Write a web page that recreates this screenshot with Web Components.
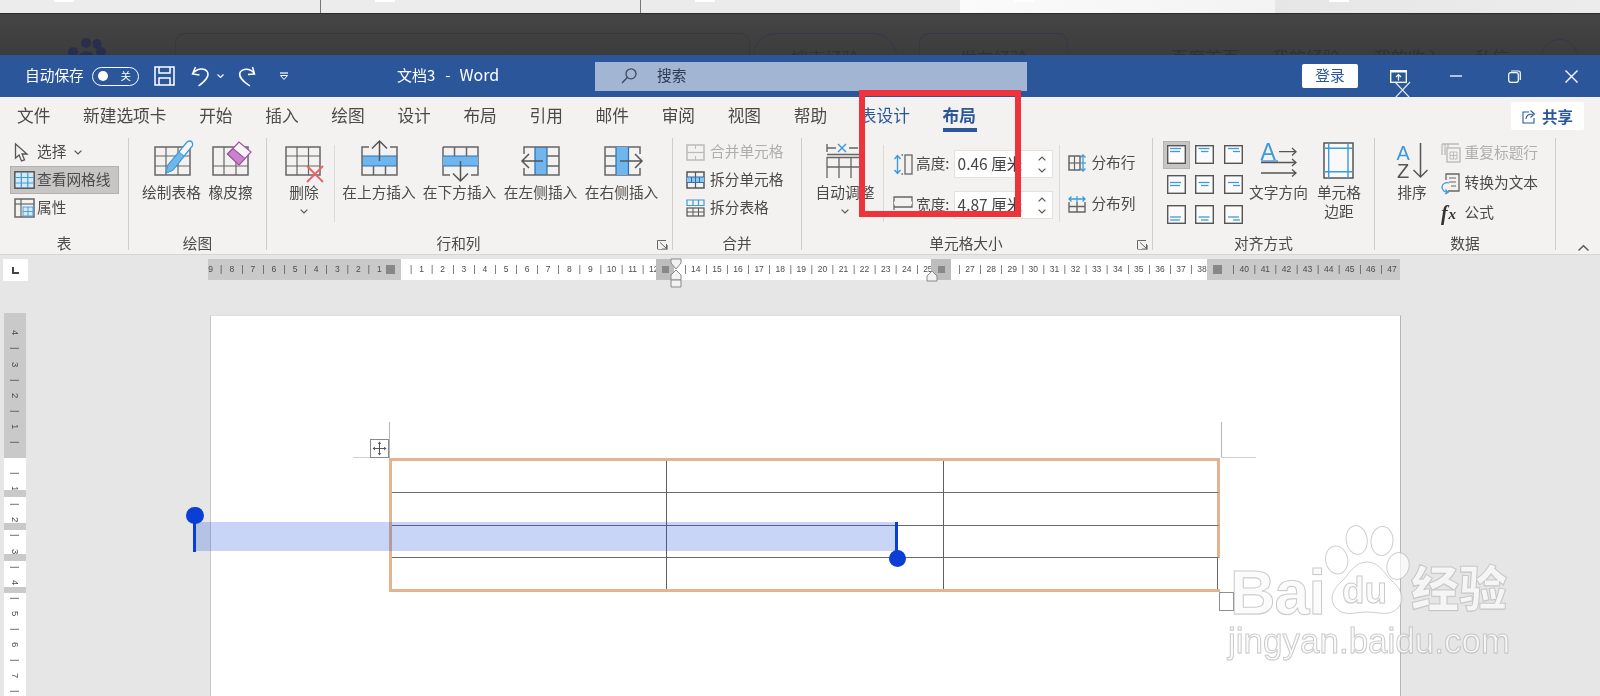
<!DOCTYPE html>
<html lang="zh"><head><meta charset="utf-8"><title>文档3 - Word</title>
<style>
html,body{margin:0;padding:0;width:1600px;height:696px;overflow:hidden;background:#e6e6e6}
body{position:relative;font-family:"Noto Sans CJK SC","Liberation Sans",sans-serif;color:#4a4a4a;filter:blur(.4px)}
</style></head><body>
<wd-webstrip></wd-webstrip>
<wd-webbar></wd-webbar>
<wd-titlebar></wd-titlebar>
<wd-tabs></wd-tabs>
<wd-ribbon>
  <rb-group w="129" pl="10" label="表">
    <div style="display:flex;flex-direction:column;width:109px">
      <rb-small icon="pointer" chev style="--ico:20.5px;--gap:3px;--pad:3.5px">选择</rb-small>
      <rb-small icon="gridview" on style="--ico:20.5px;--gap:3px;--pad:3.5px">查看网格线</rb-small>
      <rb-small icon="props" style="--ico:20.5px;--gap:3px;--pad:3.5px">属性</rb-small>
    </div>
  </rb-group>
  <rb-group w="138" pl="13" label="绘图">
    <rb-big w="59" icon="draw">绘制表格</rb-big>
    <rb-big w="44" icon="eraser" style="margin-left:7.6px">橡皮擦</rb-big>
  </rb-group>
  <rb-group w="406" pl="18" label="行和列" shift="11" launcher>
    <rb-big w="38" icon="del" chev>删除</rb-big>
    <rb-sep style="margin-left:11px"></rb-sep>
    <rb-big w="74" icon="above" style="margin-left:7px">在上方插入</rb-big>
    <rb-big w="74" icon="below" style="margin-left:6.6px">在下方插入</rb-big>
    <rb-big w="74" icon="left" style="margin-left:7px">在左侧插入</rb-big>
    <rb-big w="74" icon="right" style="margin-left:7px">在右侧插入</rb-big>
  </rb-group>
  <rb-group w="129" pl="13" label="合并">
    <div style="display:flex;flex-direction:column;width:110px">
      <rb-small icon="merge" disabled style="--ico:19px;--gap:5px">合并单元格</rb-small>
      <rb-small icon="splitcell" style="--ico:19px;--gap:5px">拆分单元格</rb-small>
      <rb-small icon="splittable" style="--ico:19px;--gap:5px">拆分表格</rb-small>
    </div>
  </rb-group>
  <rb-group w="351" pl="13" label="单元格大小" shift="11" launcher>
    <rb-big w="60" icon="autofit" chev>自动调整</rb-big>
    <rb-sep style="margin-left:7.6px"></rb-sep>
    <div style="display:flex;flex-direction:column;gap:13px;padding-top:12px;margin-left:9px">
      <rb-field icon="height" label="高度:" value="0.46 厘米"></rb-field>
      <rb-field icon="width" label="宽度:" value="4.87 厘米"></rb-field>
    </div>
    <rb-sep style="margin-left:6px"></rb-sep>
    <div style="display:flex;flex-direction:column;gap:13px;padding-top:11px;margin-left:8.4px;width:70px">
      <rb-small icon="distrow" style="--ico:18px;--gap:5.4px">分布行</rb-small>
      <rb-small icon="distcol" style="--ico:18px;--gap:5.4px">分布列</rb-small>
    </div>
  </rb-group>
  <rb-group w="222" pl="10" label="对齐方式">
    <rb-tilegrid></rb-tilegrid>
    <rb-big w="59" icon="textdir" style="margin-left:1.4px">文字方向</rb-big>
    <rb-big w="44" icon="margins" style="margin-left:9px">单元格<br>边距</rb-big>
  </rb-group>
  <rb-group w="181" pl="22" label="数据">
    <rb-big w="30" icon="sort">排序</rb-big>
    <div style="display:flex;flex-direction:column;margin-left:13.5px;width:100px">
      <rb-small icon="repeat" disabled style="--ico:20px;--gap:4.1px;--h:30px">重复标题行</rb-small>
      <rb-small icon="convert" style="--ico:20px;--gap:4.1px;--h:30px">转换为文本</rb-small>
      <rb-small icon="fx" style="--ico:20px;--gap:4.1px;--h:31px">公式</rb-small>
    </div>
  </rb-group>
  <wd-icon name="collapse" style="margin:107px 0 0 22px"></wd-icon>
</wd-ribbon>
<wd-hruler></wd-hruler>
<wd-docarea></wd-docarea>
<wd-overlay></wd-overlay>

<script>
const S='#666',B='#3f9bd8',F='#6fb6ee';
const svg=(w,h,inner)=>`<svg xmlns="http://www.w3.org/2000/svg" width="${w}" height="${h}" viewBox="0 0 ${w} ${h}" fill="none" stroke-linecap="butt" style="overflow:visible;display:block">${inner}</svg>`;
const tbl=(x,y,w,h,cols,rows,c=S,sw=1.5)=>{
  let s=`<rect x="${x}" y="${y}" width="${w}" height="${h}" stroke="${c}" stroke-width="${sw}"/>`;
  cols.forEach(a=>s+=`<path d="M${a} ${y}V${y+h}" stroke="${c}" stroke-width="${sw*.8}"/>`);
  rows.forEach(a=>s+=`<path d="M${x} ${a}H${x+w}" stroke="${c}" stroke-width="${sw*.8}"/>`);
  return s;};
const W='#fff';
const ICONS={
 save:svg(21,20,`<path d="M1 1H20V19H1Z" stroke="${W}" stroke-width="1.5"/><path d="M5 1V7H16V1M5 19V12H16V19" stroke="${W}" stroke-width="1.5"/>`),
 undo:svg(19,20,`<path d="M4.5 1L1.5 8L8.5 9M1.5 8C6 2 14 1.5 16.5 6C19 11 13 16 7.5 20" stroke="${W}" stroke-width="1.5"/>`),
 redo:svg(19,20,`<path d="M14.5 1L16.5 8L10 8.5M16.5 8C13 2 5 2 2 6.5C0 11.5 6 16 12 20" stroke="${W}" stroke-width="1.5"/>`),
 chevw:svg(7,5,`<path d="M.5 .5L3.5 3.5L6.5 .5" stroke="${W}" stroke-width="1.2"/>`),
 qat:svg(8,8,`<path d="M0 1H8" stroke="${W}" stroke-width="1.2"/><path d="M.5 3.5H7.5L4 7.5Z" stroke="${W}" stroke-width="1"/>`),
 search:svg(16,16,`<circle cx="10" cy="5.8" r="5" stroke="#3c4a60" stroke-width="1.3"/><path d="M6.3 9.5L1 15" stroke="#3c4a60" stroke-width="1.4"/>`),
 display:svg(17,13,`<rect x=".7" y=".7" width="15.6" height="11.6" stroke="${W}" stroke-width="1.3"/><path d="M.7 1.5H16.3" stroke="${W}" stroke-width="2"/><path d="M8.5 10.5V4.5M6 7L8.5 4.5L11 7" stroke="${W}" stroke-width="1.2"/><path d="M5 12L20 28M20 12L5 28" stroke="#dfe6f2" stroke-width="1.2"/>`),
 min:svg(12,2,`<path d="M0 1H12" stroke="${W}" stroke-width="1.3"/>`),
 restore:svg(13,13,`<rect x=".7" y="2.7" width="9.6" height="9.6" rx="2" stroke="${W}" stroke-width="1.2"/><path d="M3 1H10.5Q12.3 1 12.3 3V10" stroke="${W}" stroke-width="1.2"/>`),
 close:svg(13,13,`<path d="M.5 .5L12.5 12.5M12.5 .5L.5 12.5" stroke="${W}" stroke-width="1.4"/>`),
 share:svg(14,15,`<path d="M7 3H1V14H12V9" stroke="#2b579a" stroke-width="1.1"/><path d="M4 10C4 6 7 5 11 5M8.5 1.5L12.5 5L8.5 8.5" stroke="#2b579a" stroke-width="1.1"/>`),
 pointer:svg(15,19,`<path d="M2 1V15L5.6 12L8 18L11 16.8L8.6 11H13.5Z" stroke="#555" stroke-width="1.3" transform="translate(-.5 0)"/>`),
 gridview:svg(21,18,`<rect x=".8" y=".8" width="19.4" height="16.4" fill="#d3eafa" stroke="#555" stroke-width="1.5"/><path d="M7.3 1V17M13.8 1V17M1 6.5H20M1 12H20" stroke="${B}" stroke-width="1.2"/>`),
 props:svg(21,20,tbl(1,1,19,18,[7],[6]) +`<rect x="9" y="9" width="10" height="9" fill="#d3eafa" stroke="${B}" stroke-width=".9"/><path d="M14 9V18M9 13.5H19" stroke="${B}" stroke-width=".9"/>`),
 draw:svg(40,42,tbl(3,5,35,28,[14,26],[14,24])+`<path d="M14 31L16 23L35 0Q38 -2 40 0Q41.5 3 39.5 5L21 28Z" fill="#f7f7f7" stroke="${B}" stroke-width="1.3"/><path d="M14 31L16 23L27 10L32 14L21 28Z" fill="${F}" stroke="${B}" stroke-width="1"/>`),
 eraser:svg(40,42,tbl(2,5,35,28,[13,25],[24])+`<path d="M16.5 12L28 0L40 10L28 23Z" fill="#f7f7f7" stroke="#a24fa8" stroke-width="1.2"/><path d="M16.5 12L22 6.5L34 16.5L28 23Z" fill="#c983cb" stroke="#a24fa8" stroke-width="1.1"/>`),
 del:svg(38,42,tbl(1,5,34,28,[12,23.5],[14,24])+`<path d="M22 24L38 40M38 24L22 40" stroke="#e8636a" stroke-width="1.8"/>`),
 above:svg(40,42,`<path d="M3 12V5H10M31 5H38V12" stroke="${S}" stroke-width="1.5"/><rect x="3" y="14" width="35" height="10" fill="${F}"/><path d="M3 14H38M3 24H38" stroke="#2e6fb0" stroke-width="1.2"/><path d="M3 12V33H38V12M14.5 24V33M26.5 24V33" stroke="${S}" stroke-width="1.5"/><path d="M20.5 -1V19M13 6.5L20.5 -1L28 6.5" stroke="#555" stroke-width="1.5"/>`),
 below:svg(40,42,`<path d="M3 5H38V26M3 5V26M14.5 5V14M26.5 5V14" stroke="${S}" stroke-width="1.5"/><rect x="3" y="14" width="35" height="10" fill="${F}"/><path d="M3 14H38M3 24H38" stroke="#2e6fb0" stroke-width="1.2"/><path d="M3 26V33H10M31 33H38V26" stroke="${S}" stroke-width="1.5"/><path d="M20.5 19V39M13 31.5L20.5 39L28 31.5" stroke="#555" stroke-width="1.5"/>`),
 left:svg(40,42,`<path d="M9 5H3V12M3 26V33H9" stroke="${S}" stroke-width="1.5"/><rect x="14" y="5" width="12" height="28" fill="${F}"/><path d="M14 5V33M26 5V33" stroke="#2e6fb0" stroke-width="1.2"/><path d="M9 5H38V33H9M26 14H38M26 24H38" stroke="${S}" stroke-width="1.5"/><path d="M22 19H1M8 12L1 19L8 26" stroke="#555" stroke-width="1.5"/>`),
 right:svg(40,42,`<path d="M32 5H3V33H32M3 14H14M3 24H14" stroke="${S}" stroke-width="1.5"/><path d="M32 5H38V12M38 26V33H32" stroke="${S}" stroke-width="1.5"/><rect x="14" y="5" width="12.5" height="28" fill="${F}"/><path d="M14 5V33M26.5 5V33" stroke="#2e6fb0" stroke-width="1.2"/><path d="M18 19H40M33 12L40 19L33 26" stroke="#555" stroke-width="1.5"/>`),
 merge:svg(19,17,tbl(1,1,17,15,[],[8.5],'#bbb')+`<path d="M9.5 1V5M9.5 12V16" stroke="#bbb"/>`),
 splitcell:svg(19,18,tbl(1,1,17,16,[9.5],[],'#555')+`<rect x="1" y="6" width="17" height="5.5" fill="#8cc5ef"/><path d="M1 6H18M1 11.5H18M5.5 6V11.5M9.5 6V11.5M13.5 6V11.5" stroke="#2e6fb0"/>`),
 splittable:svg(19,18,`<path d="M1 1H18V6.5H1ZM7 1V6.5M12.5 1V6.5" stroke="${B}" stroke-width="1.2"/>`+tbl(1,9,17,8,[7,12.5],[13],'#555',1.2)),
 autofit:svg(40,42,`<path d="M2 2V10M2 6H11M24 6H33M38 2V10" stroke="${S}" stroke-width="1.4"/><path d="M13 2L21 10M21 2L13 10" stroke="${B}" stroke-width="1.5"/><path d="M2 12.5H38M2 15.5H38" stroke="${S}" stroke-width="1.3"/><path d="M2 15V36M14 15V36M26 15V36M38 15V36M2 25H38" stroke="${S}" stroke-width="1.3"/>`),
 height:svg(20,21,`<path d="M4.5 2V19M1.5 5L4.5 1.5L7.5 5M1.5 16L4.5 19.5L7.5 16" stroke="${B}" stroke-width="1.4"/><path d="M8.5 1H10M8.5 20H10" stroke="${S}" stroke-width="1.3"/><rect x="12" y="1" width="7" height="19" stroke="${S}" stroke-width="1.3"/>`),
 width:svg(20,21,`<path d="M1 2H19V12H1ZM1 15V7" stroke="${S}" stroke-width="1.3"/><path d="M1 8H19" stroke="#f3f2f1" stroke-width="3"/><path d="M1 19H19M4 16.5L1 19L4 21.5M16 16.5L19 19L16 21.5" stroke="${B}" stroke-width="1.3"/>`),
 distrow:svg(18,18,tbl(1,2,11,14,[6.5],[9])+`<path d="M15 1V17M12.5 3.5L15 1L17.5 3.5M12.5 14.5L15 17L17.5 14.5" stroke="${B}" stroke-width="1.3"/><path d="M12 9H18" stroke="${B}" stroke-width="1.2"/>`),
 distcol:svg(18,18,`<path d="M1 4H17M3.5 1.5L1 4L3.5 6.5M14.5 1.5L17 4L14.5 6.5" stroke="${B}" stroke-width="1.3" /><path d="M9 1V7" stroke="${B}" stroke-width="1.2"/><path d="M1 7V17H17V7M9 7V17M1 11.5H17" stroke="${S}" stroke-width="1.4"/>`),
 textdir:svg(40,42,`<text x="2.5" y="17.5" font-family="Liberation Sans,sans-serif" font-size="23" fill="${B}" stroke="none">A</text><path d="M3 19H20" stroke="${B}" stroke-width="1.4"/><path d="M21 9.7H38M34 6L38 9.7L34 13.5M3 20.5H38M34 17L38 20.5L34 24M3 31H38M34 27.5L38 31L34 34.5" stroke="#555" stroke-width="1.3"/>`),
 margins:svg(40,42,`<rect x="5" y="1" width="29" height="35" fill="#f9f9f9" stroke="#555" stroke-width="1.5"/><path d="M9.7 1V36M29 1V36M5 6.3H34M5 29.7H34" stroke="${B}" stroke-width="1.4"/>`),
 sort:svg(40,42,`<text x="4.5" y="18" font-family="Liberation Sans,sans-serif" font-size="20" fill="${B}" stroke="none">A</text><text x="5" y="36" font-family="Liberation Sans,sans-serif" font-size="20" fill="#555" stroke="none">Z</text><path d="M28.5 1V35M21.5 28L28.5 35L35.5 28" stroke="#555" stroke-width="1.5"/>`),
 repeat:svg(20,20,`<path d="M1 1H18M1 1V12M4 1V12M7 1V5" stroke="#bbb" stroke-width="1.3"/><rect x="6" y="5" width="13" height="14" stroke="#bbb" stroke-width="1.4"/><path d="M9 9H16V16H9ZM12.5 9V16M9 12.5H16" stroke="#bbb"/>`),
 convert:svg(20,21,`<path d="M5 7V1H18V18H7" stroke="${S}" stroke-width="1.3"/><path d="M8 5H15M8 9H15M10 13H15" stroke="${S}"/><path d="M8 10A5 5 0 0 0 1 14A5 5 0 0 0 7 19M4.5 16.5L7 19.5L4 21" stroke="${B}" stroke-width="1.3"/>`),
 fx:svg(20,20,`<text x="0" y="16" font-family="Liberation Serif,serif" font-style="italic" font-weight="700" font-size="20" fill="#333" stroke="none">f</text><text x="7.5" y="15" font-family="Liberation Serif,serif" font-style="italic" font-weight="700" font-size="15" fill="#333" stroke="none">x</text>`),
 launcher:svg(11,10,`<path d="M.5 9V.5H9" stroke="#666"/><path d="M3 2.5L9.5 8.5M9.5 4V9H5" stroke="#666"/><path d="M.5 9.5H10.5V5" stroke="#999"/>`),
 chev:svg(8,5,`<path d="M.6 .6L4 4L7.4 .6" stroke="#555" stroke-width="1.2"/>`),
 up:svg(8,5,`<path d="M.6 4.4L4 1L7.4 4.4" stroke="#555" stroke-width="1.2"/>`),
 collapse:svg(11,6,`<path d="M.5 5.5L5.5 .7L10.5 5.5" stroke="#555" stroke-width="1.4"/>`),
 paw:svg(39,18,`<ellipse cx="19" cy="5" rx="5" ry="5" fill="#2b2e4a"/><ellipse cx="30" cy="6" rx="4.5" ry="5" fill="#2b2e4a"/><ellipse cx="6" cy="14" rx="5" ry="5" fill="#2b2e4a"/><ellipse cx="34" cy="14" rx="5" ry="5" fill="#2b2e4a"/><path d="M12 18C14 12 25 12 27 18Z" fill="#2b2e4a"/>`)
};
const def=(n,c)=>customElements.define(n,c);
const sh=(el,html)=>{el.attachShadow({mode:'open'}).innerHTML=html;return el.shadowRoot;};

def('wd-icon',class extends HTMLElement{connectedCallback(){if(this.shadowRoot)return;
 sh(this,`<style>:host{display:block;flex:none;line-height:0}</style>${ICONS[this.getAttribute('name')]||''}`);}});

def('wd-webstrip',class extends HTMLElement{connectedCallback(){
 const cell=(w,bg,bord)=>`<div style="width:${w}px;background:${bg};${bord?'border-right:1px solid #777;':''}"><i></i></div>`;
 sh(this,`<style>:host{display:flex;height:13px;border-bottom:1px solid #2c2c2c;overflow:hidden}
 div{flex:none;height:13px;box-sizing:border-box}i{display:block;margin-left:54px;width:20px;height:1.5px;background:#fff}</style>
 ${cell(320.5,'#ececec',1)}${cell(320,'#ececec',1)}${cell(319.5,'#ebebeb',0)}${cell(315,'linear-gradient(90deg,#fbfbfb,#f3f3f3)',0)}${cell(325,'linear-gradient(90deg,#e6e6e6,#ececec)',0)}`);}});

def('wd-webbar',class extends HTMLElement{connectedCallback(){
 sh(this,`<style>:host{display:flex;height:41px;background:linear-gradient(#454545,#3c3c3c);overflow:hidden;align-items:flex-start;color:#2f3136;font-size:17px;line-height:20px}
 .paw{margin:24px 0 0 67px}.sb{flex:none;width:575px;height:60px;margin:19px 0 0 69px;border:1px solid #363840;border-radius:10px;box-sizing:border-box}
 .b{flex:none;height:60px;box-sizing:border-box;border:1.5px solid #33384a;margin-top:19px;text-align:center;padding-top:14px}
 .n{flex:none;margin-top:33px;white-space:nowrap}
 .av{flex:none;width:37px;height:37px;border-radius:50%;border:1.5px solid #343847;margin:25px 0 0 32px;box-sizing:border-box}</style>
 <wd-icon class="paw" name="paw"></wd-icon><div class="sb"></div>
 <div class="b" style="width:144px;margin-left:3px;border-radius:24px">搜索经验</div>
 <div class="b" style="width:149px;margin-left:22px;border-radius:10px">发布经验</div>
 <span class="n" style="margin-left:103px;width:68px">百度首页</span><span class="n" style="margin-left:33px;width:68px">我的经验</span><span class="n" style="margin-left:34px;width:68px">我的收入</span><span class="n" style="margin-left:33px;width:34px">私信</span><div class="av"></div>`);}});

def('wd-titlebar',class extends HTMLElement{connectedCallback(){
 const ic=(n,ml,w)=>`<wd-icon name="${n}" style="margin-left:${ml}px;width:${w}px"></wd-icon>`;
 sh(this,`<style>:host{display:flex;align-items:center;height:42px;background:#2b579a;color:#fff;font-size:14.7px;padding-left:25px;box-sizing:border-box;overflow:hidden;white-space:nowrap}
 .tg{flex:none;width:47px;height:19px;box-sizing:border-box;border:1.3px solid #fff;border-radius:10px;margin-left:8px;display:flex;align-items:center;justify-content:space-between;padding:0 7px 0 5px;font-size:10.5px;line-height:10px}
 .tg i{width:10px;height:10px;border-radius:50%;background:#fff}
 .t{flex:none;width:101px;margin-left:109px;font-size:15px;display:flex;align-items:baseline;padding-bottom:4px}
 .t b{font-weight:400;margin-left:10px}.t u{text-decoration:none;font-size:16px;margin-left:9px}
 .s{flex:none;width:432px;height:29px;margin-left:97px;background:#a2b6d4;color:#2c3a52;display:flex;align-items:center;box-sizing:border-box;padding-left:26px;gap:20px;font-size:14.7px}
 .s span{padding-bottom:3px}
 .l{flex:none;width:56px;height:24px;margin-left:275px;background:#fff;color:#2b579a;border-radius:2px;display:flex;align-items:center;justify-content:center;font-size:14.7px;padding-bottom:3px;box-sizing:border-box}
 .lab{flex:none;width:59px;padding-bottom:4px}</style>
 <span class="lab">自动保存</span><div class="tg"><i></i><span>关</span></div>
 ${ic('save',15,21)}${ic('undo',16,19)}${ic('chevw',7,7)}${ic('redo',14,19)}${ic('qat',23,8)}
 <div class="t"><span>文档3</span><b>-</b><u>Word</u></div>
 <div class="s"><wd-icon name="search"></wd-icon><span>搜索</span></div>
 <div class="l">登录</div>
 ${ic('display',32,17)}${ic('min',43,12)}${ic('restore',46,13)}${ic('close',44,13)}`);}});

def('wd-tabs',class extends HTMLElement{connectedCallback(){
 const t=['文件','新建选项卡','开始','插入','绘图','设计','布局','引用','邮件','审阅','视图','帮助'];
 sh(this,`<style>:host{display:flex;height:38px;background:#f3f2f1;padding-left:17px;gap:32.7px;font-size:16.7px;line-height:36px;color:#4a4a4a;white-space:nowrap;box-sizing:border-box}
 span{flex:none}.blue{color:#2b579a}.act{color:#2b579a;font-weight:700;position:relative}
 .act::after{content:"";position:absolute;left:0;right:-1px;top:31px;height:4px;background:#2b579a}
 .sh{margin-left:auto;margin-right:16px;margin-top:5px;width:73px;height:28px;background:#fff;color:#2b579a;font-weight:700;font-size:15.5px;line-height:25px;display:flex;align-items:center;justify-content:center;gap:6px;flex:none;border-radius:2px}</style>
 ${t.map(x=>`<span>${x}</span>`).join('')}<span class="blue">表设计</span><span class="act">布局</span>
 <div class="sh"><wd-icon name="share"></wd-icon><span>共享</span></div>`);}});

def('wd-ribbon',class extends HTMLElement{connectedCallback(){
 sh(this,`<style>:host{display:flex;align-items:flex-start;height:120px;background:#f3f2f1;padding-top:3px;box-sizing:border-box;border-bottom:1px solid #d6d5d4;box-shadow:0 2px 2px #d8d8d8}</style><slot></slot>`);}});

def('rb-group',class extends HTMLElement{connectedCallback(){
 const w=this.getAttribute('w'),pl=this.getAttribute('pl')||0,shift=this.getAttribute('shift')||0;
 sh(this,`<style>:host{display:flex;flex-direction:column;flex:none;position:relative;height:112px;width:${w}px;box-sizing:border-box;border-right:1px solid #cfcdcb;font-size:14.7px}
 .b{display:flex;align-items:flex-start;height:95px;padding-left:${pl}px;flex:none}
 .lab{line-height:20px;text-align:center;padding-right:${shift*2}px;white-space:nowrap;color:#4a4a4a}
 wd-icon{position:absolute;right:4px;bottom:0}</style>
 <div class="b"><slot></slot></div><div class="lab">${this.getAttribute('label')}</div>
 ${this.hasAttribute('launcher')?'<wd-icon name="launcher"></wd-icon>':''}`);}});

def('rb-sep',class extends HTMLElement{connectedCallback(){
 sh(this,`<style>:host{display:block;flex:none;width:1px;height:77px;margin-top:7px;background:#dcdad8}</style>`);}});

def('rb-big',class extends HTMLElement{connectedCallback(){
 const ch=this.hasAttribute('chev');
 sh(this,`<style>:host{display:flex;flex-direction:column;align-items:center;flex:none;width:${this.getAttribute('w')}px;padding-top:4px;text-align:center;white-space:nowrap}
 .t{line-height:18.5px;color:#4a4a4a;margin-top:-1px}.i{height:42px;flex:none}.c{margin-top:7px}</style>
 <wd-icon class="i" name="${this.getAttribute('icon')}"></wd-icon><div class="t"><slot></slot></div>
 ${ch?'<wd-icon class="c" name="chev"></wd-icon>':''}`);}});

def('rb-small',class extends HTMLElement{connectedCallback(){
 const on=this.hasAttribute('on'),dis=this.hasAttribute('disabled'),ch=this.hasAttribute('chev');
 sh(this,`<style>:host{display:flex;align-items:center;flex:none;height:var(--h,28px);padding-left:var(--pad,0);gap:var(--gap,4px);white-space:nowrap;box-sizing:border-box;
 color:${dis?'#aeaeae':'#4a4a4a'};${on?'background:#c8c6c4;box-shadow:inset 0 0 0 1px #b3b1af;':''}}
 .i{width:var(--ico,20px);flex:none}.c{margin-left:5px}.x{padding-bottom:4px}</style>
 <wd-icon class="i" name="${this.getAttribute('icon')}"></wd-icon><span class="x"><slot></slot></span>${ch?'<wd-icon class="c" name="chev"></wd-icon>':''}`);}});

def('rb-field',class extends HTMLElement{connectedCallback(){
 sh(this,`<style>:host{display:flex;align-items:center;height:28px;width:160px;white-space:nowrap}
 .ic{width:20px}.l{margin-left:3.4px;width:37.6px;flex:none;padding-bottom:4px}
 .in{flex:none;width:99px;height:28px;box-sizing:border-box;background:#fff;border:1px solid #e3e1df;display:flex;align-items:center;justify-content:space-between;padding:0 6px 0 3px;font-size:15.5px;color:#444}
 .in>span{padding-bottom:2px}.sp{display:flex;flex-direction:column;gap:7px}</style>
 <wd-icon class="ic" name="${this.getAttribute('icon')}"></wd-icon><span class="l">${this.getAttribute('label')}</span>
 <div class="in"><span>${this.getAttribute('value')}</span><div class="sp"><wd-icon name="up"></wd-icon><wd-icon name="chev"></wd-icon></div></div>`);}});

def('rb-tile',class extends HTMLElement{connectedCallback(){
 const v=+this.getAttribute('v'),h=+this.getAttribute('h'),on=this.hasAttribute('on');
 const y=[3.5,7.5,12][v];
 const x=[3,3.5,4][h];
 const l2=[[3,10],[6,7.5],[9,7]][h];
 sh(this,`<style>:host{display:flex;align-items:center;justify-content:center;width:28.2px;height:30px;position:relative}
 .bg{position:absolute;left:0;top:1.5px;width:27px;height:28px;background:${on?'#c8c6c4':'transparent'};${on?'box-shadow:inset 0 0 0 1px #b5b3b1':''}}
 svg{position:relative;left:-.4px}</style><div class="bg"></div>
 <svg width="19" height="19" viewBox="0 0 19 19" fill="none"><rect x=".7" y=".7" width="17.6" height="17.6" fill="#fbfbfb" stroke="#555" stroke-width="1.4"/>
 <path d="M${x} ${y}h11" stroke="${B}" stroke-width="1.3"/>
 <path d="M${l2[0]} ${y+3}h${l2[1]}" stroke="${B}" stroke-width="1.3"/></svg>`);}});

def('rb-tilegrid',class extends HTMLElement{connectedCallback(){
 let s='';for(let v=0;v<3;v++)for(let h=0;h<3;h++)s+=`<rb-tile v="${v}" h="${h}"${v==0&&h==0?' on':''}></rb-tile>`;
 sh(this,`<style>:host{display:grid;grid-template-columns:repeat(3,28.2px);grid-template-rows:repeat(3,30px);flex:none;padding-top:1px}</style>${s}`);}});

def('wd-hruler',class extends HTMLElement{connectedCallback(){
 let cells='';
 for(let i=-18;i<=95;i++){
   const n=i/2,abs=Math.abs(n);
   let t=Number.isInteger(n)?(n===0?'':abs):'|';
   if([13,26,39].includes(n))t='';
   cells+=`<span>${t}</span>`;
 }
 sh(this,`<style>:host{display:flex;align-items:flex-start;height:26px;padding-top:4px;box-sizing:border-box;position:relative;background:#e6e6e6}
 .cor{flex:none;width:25px;height:22px;margin-left:3px;background:#fff;box-sizing:border-box;display:flex;align-items:center;justify-content:center}
 .cor i{display:block;width:5px;height:5px;border-left:2px solid #444;border-bottom:2px solid #444}
 .st{flex:none;margin-left:180px;width:1192px;height:21px;overflow:hidden;background:linear-gradient(90deg,#c9c9c9 192.6px,#fff 192.6px,#fff 999.4px,#c9c9c9 999.4px);display:flex;font:8.5px/21px "Liberation Sans",sans-serif;color:#4c4c4c}
 .st>div{display:flex;margin-left:-2.6px;flex:none}
 .st span{flex:none;width:10.55px;text-align:center}
 .m{position:absolute;top:4px;height:21px;background:#bdbdbd;display:flex;align-items:center;justify-content:center}
 .m i{display:block;width:7px;height:7px;background:#888}
 svg{position:absolute}</style>
 <div class="cor"><i></i></div><div class="st"><div>${cells}</div></div>
 <div class="m" style="left:385px;width:10px;background:#c9c9c9"><i style="width:9px;height:9px"></i></div>
 <div class="m" style="left:656px;width:18px"><i></i></div>
 <div class="m" style="left:931px;width:20px"><i></i></div>
 <div class="m" style="left:1211px;width:13px;background:#c9c9c9"><i style="width:9px;height:9px"></i></div>
 <svg style="left:670px;top:3px" width="12" height="31" viewBox="0 0 12 31" fill="#f2f2f2" stroke="#888"><path d="M1 1H11V5L6 11L1 5Z"/><path d="M6 12L11 17V22H1V17Z"/><path d="M1 22H11V29H1Z"/></svg>
 <svg style="left:926px;top:15px" width="12" height="12" viewBox="0 0 12 12" fill="#f2f2f2" stroke="#888"><path d="M6 1L11 6V11H1V6Z"/></svg>`);}});

def('wd-vruler',class extends HTMLElement{connectedCallback(){
 const seq=['4','|','3','|','2','|','1','|','','|','1','|','2','|','3','|','4','|','5','|','6','|','7','|'];
 sh(this,`<style>:host{display:block;flex:none;width:22px;height:383px;margin-left:4px;padding-top:12.2px;box-sizing:border-box;position:relative;overflow:hidden;background:linear-gradient(#c9c9c9 145px,#fff 145px)}
 span{display:flex;width:100%;height:15.6px;align-items:center;justify-content:center;writing-mode:vertical-rl;font:9.5px/1 "Liberation Sans",sans-serif;color:#4c4c4c}
 i{position:absolute;left:0;right:0;height:7px;background:#c9c9c9}</style>
 ${seq.map(x=>`<span>${x}</span>`).join('')}
 <i style="top:177px"></i><i style="top:210px"></i><i style="top:241px"></i><i style="top:274px;height:6px"></i>`);}});

def('wd-table',class extends HTMLElement{connectedCallback(){
 let c='';
 for(let r=0;r<4;r++)for(let k=0;k<3;k++){
  const cls=[r<3?'bb':'',k<2?'br':'',k==2&&r<3?'or':'',k==2&&r==3?'dk':''].join(' ');
  c+=`<div class="${cls}"></div>`;}
 sh(this,`<style>:host{display:grid;flex:none;width:830.5px;box-sizing:border-box;grid-template-columns:274.7px 277px 1fr;grid-template-rows:32px 33px 31.5px 31px;border:3px solid #e3b48f;border-right:0}
 div{box-sizing:border-box}.bb{border-bottom:1.5px solid #6a6a6a}.br{border-right:1.5px solid #5f5f5f}.or{border-right:3px solid #e3b48f}.dk{border-right:1.5px solid #666;margin-right:1.5px}</style>${c}`);}});

def('wd-page',class extends HTMLElement{connectedCallback(){
 sh(this,`<style>:host{display:block;flex:none;width:1191px;height:381px;margin:2px 0 0 184px;background:#fff;box-sizing:border-box;border-left:1px solid #c6c6c6;border-top:1px solid #dedede;border-right:1px solid #b5b5b5;padding:142px 0 0 178px}</style><slot></slot>`);}});

def('wd-docarea',class extends HTMLElement{connectedCallback(){
 sh(this,`<style>:host{display:flex;align-items:flex-start;padding-top:32px;height:415px;box-sizing:border-box;background:#e6e6e6;overflow:hidden}</style><wd-vruler></wd-vruler><wd-page><wd-table></wd-table></wd-page>`);}});

def('wd-overlay',class extends HTMLElement{connectedCallback(){
 const st='rgba(185,185,185,.75)';
 sh(this,`<style>:host{position:absolute;left:0;top:0;width:1600px;height:696px;pointer-events:none;display:block}
 .a{position:absolute;box-sizing:border-box}
 .t{position:absolute;white-space:nowrap;color:rgba(255,255,255,.75);-webkit-text-stroke:1px ${st};font-family:"Liberation Sans",sans-serif;font-weight:700;line-height:1;text-shadow:0 1px 1px rgba(0,0,0,.06)}
 </style>
 <div class="a" style="left:859px;top:90px;width:162px;height:127px;border:6px solid #ee343a"></div>
 <div class="a" style="left:196px;top:522px;width:700px;height:29px;background:rgba(30,80,220,.24)"></div>
 <div class="a" style="left:193px;top:522px;width:3.4px;height:30px;background:#0a3fd6"></div>
 <div class="a" style="left:186px;top:506.5px;width:17.5px;height:17.5px;border-radius:50%;background:#0a3fd6"></div>
 <div class="a" style="left:895px;top:522px;width:3.2px;height:32px;background:#0a3fd6"></div>
 <div class="a" style="left:888.5px;top:549.5px;width:17.5px;height:17.5px;border-radius:50%;background:#0a3fd6"></div>
 <div class="a" style="left:388.5px;top:422px;width:1px;height:36px;background:#b5b5b5"></div>
 <div class="a" style="left:353px;top:457px;width:36px;height:1px;background:#cfcfcf"></div>
 <div class="a" style="left:1221px;top:422px;width:1px;height:36px;background:#b5b5b5"></div>
 <div class="a" style="left:1221px;top:457px;width:35px;height:1px;background:#cfcfcf"></div>
 <div class="a" style="left:370px;top:439px;width:19px;height:18.5px;border:1px solid #8a8a8a;background:#fff;display:flex;align-items:center;justify-content:center">
  <svg width="15" height="15" viewBox="0 0 15 15" fill="#555" stroke="#555"><path d="M7.5 1V14M1 7.5H14" stroke-width="1"/><path d="M7.5 .5L5.8 3H9.2ZM7.5 14.5L5.8 12H9.2ZM.5 7.5L3 5.8V9.2ZM14.5 7.5L12 5.8V9.2Z" stroke="none"/></svg></div>
 <div class="a" style="left:1219px;top:592px;width:15px;height:18.5px;border:1.2px solid #8f8f8f"></div>
 <svg class="a" style="left:1325px;top:520px" width="90" height="100" viewBox="1325 520 90 100" fill="rgba(255,255,255,.72)" stroke="rgba(185,185,185,.7)" stroke-width="1">
  <ellipse cx="1336.7" cy="560" rx="11" ry="14" transform="rotate(-12 1336.7 560)"/><ellipse cx="1356.7" cy="540" rx="10.5" ry="14.5" transform="rotate(-8 1356.7 540)"/><ellipse cx="1382" cy="541" rx="11" ry="14.5" transform="rotate(5 1382 541)"/><ellipse cx="1398" cy="566" rx="11" ry="13.5" transform="rotate(14 1398 566)"/>
  <path d="M1367 562C1380 562 1385 575 1393 582C1402 590 1405 600 1398 608C1390 617 1378 612 1367 612C1356 612 1344 617 1336 608C1329 600 1332 590 1341 582C1349 575 1354 562 1367 562Z"/></svg>
 <span class="t" style="left:1230px;top:561px;font-size:63px;letter-spacing:-1px">Bai</span>
 <span class="t" style="left:1342px;top:572px;font-size:37px">du</span>
 <span class="t" style="left:1411px;top:561px;font-size:48px;font-weight:900;font-family:'Noto Sans CJK SC',sans-serif">经验</span>
 <span class="t" style="left:1228px;top:623px;font-size:35px;font-weight:400">jingyan.baidu.com</span>`);}});
</script>
</body></html>
